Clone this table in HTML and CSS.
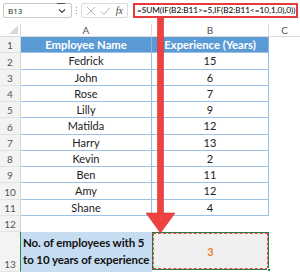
FILE: index.html
```html
<!DOCTYPE html>
<html>
<head>
<meta charset="utf-8">
<link rel="stylesheet" href="styles.css">
</head>
<body>
<div class="app">
  <div class="toolbar">
    <div class="namebox"><span class="ref">B13</span><svg class="chev" width="8" height="6" viewBox="0 0 8 6"><path d="M1 1.5 L4 4.5 L7 1.5" fill="none" stroke="#444" stroke-width="1.2"/></svg></div>
    <div class="vdots"><i></i><i></i><i></i></div>
    <div class="fxbtns">
      <svg width="10" height="10" viewBox="0 0 10 10"><path d="M1 1 L9 9 M9 1 L1 9" stroke="#b4b4b4" stroke-width="1"/></svg>
      <svg width="11" height="10" viewBox="0 0 11 10"><path d="M1 5.5 L4 8.5 L10 1.5" fill="none" stroke="#b4b4b4" stroke-width="1"/></svg>
      <span class="fx">fx</span>
    </div>
    <div class="formula">=SUM(IF(B2:B11&gt;=5,IF(B2:B11&lt;=10,1,0),0))</div>
  </div>
  <div class="sheet">
    <div class="corner"><span class="tri"></span></div>
    <div class="colh">A</div>
    <div class="colh">B</div>
    <div class="colh last">C</div>

    <div class="rowh">1</div><div class="cell head">Employee Name</div><div class="cell head">Experience (Years)</div><div class="blank"></div>
    <div class="rowh">2</div><div class="cell">Fedrick</div><div class="cell">15</div><div class="blank"></div>
    <div class="rowh">3</div><div class="cell">John</div><div class="cell">6</div><div class="blank"></div>
    <div class="rowh">4</div><div class="cell">Rose</div><div class="cell">7</div><div class="blank"></div>
    <div class="rowh">5</div><div class="cell">Lilly</div><div class="cell">9</div><div class="blank"></div>
    <div class="rowh">6</div><div class="cell">Matilda</div><div class="cell">12</div><div class="blank"></div>
    <div class="rowh">7</div><div class="cell">Harry</div><div class="cell">13</div><div class="blank"></div>
    <div class="rowh">8</div><div class="cell">Kevin</div><div class="cell">2</div><div class="blank"></div>
    <div class="rowh">9</div><div class="cell">Ben</div><div class="cell">11</div><div class="blank"></div>
    <div class="rowh">10</div><div class="cell">Amy</div><div class="cell">12</div><div class="blank"></div>
    <div class="rowh">11</div><div class="cell">Shane</div><div class="cell">4</div><div class="blank"></div>
    <div class="rowh">12</div><div class="blank"></div><div class="blank"></div><div class="blank"></div>
    <div class="rowh sel">13</div>
    <div class="label"><span>No. of employees with 5</span><span>to 10 years of experience</span></div>
    <div class="result"><span class="ants">3</span><span class="handle"></span></div>
    <div class="blank"></div>
  </div>
  <svg class="arrow" width="40" height="222" viewBox="0 0 40 222">
    <rect x="17.5" y="0" width="6" height="200" fill="#f04141" stroke="#d23434" stroke-width="0.6"/>
    <path d="M6 197 L35 197 L20.5 217 Z" fill="#f04141" stroke="#d23434" stroke-width="0.6"/>
  </svg>
</div>
</body>
</html>
```
FILE: styles.css
```css
* { box-sizing: border-box; }
html, body { margin: 0; padding: 0; background: #fff; }
body { width: 300px; height: 274px; overflow: hidden; font-family: Lato, "Liberation Sans", sans-serif; }
.app { position: relative; width: 300px; height: 274px; overflow: hidden; background: #fff; }

.toolbar { height: 24px; display: flex; align-items: flex-start; padding: 3px 0 0 3px; }
.namebox { position: relative; width: 69px; height: 15px; border: 1px solid #c9c9c9; border-radius: 2px; display: flex; align-items: center; justify-content: space-between; padding: 0 5px 0 4px; }
.namebox::after { content: ""; position: absolute; right: 6px; top: -1px; width: 8px; height: 1px; background: #555; }
.ref { font-family: "Open Sans", sans-serif; font-size: 8px; color: #222; }
.vdots { width: 9px; height: 15px; display: flex; flex-direction: column; align-items: center; justify-content: center; gap: 2px; }
.vdots i { width: 1px; height: 1px; background: #999; display: block; }
.fxbtns { width: 47px; height: 15px; border: 1px solid #dcdcdc; border-radius: 2px; display: flex; align-items: center; justify-content: space-around; padding: 0 2px; }
.fx { font-family: "Liberation Serif", serif; font-style: italic; font-size: 10px; color: #444; }
.formula { margin-left: 5px; width: 165px; height: 15px; border: 2px solid #e8393b; font-size: 8.2px; color: #000; line-height: 11px; padding-left: 2px; white-space: nowrap; overflow: hidden; }

.sheet { display: grid; grid-template-columns: 21px 131px 117px 31px; grid-template-rows: 13px repeat(12, 16.25px) 40px; }
.corner { position: relative; background: #fff; border-right: 1px solid #dadada; border-bottom: 1px solid #dadada; }
.tri { position: absolute; right: 2px; bottom: 2px; width: 0; height: 0; border-left: 9px solid transparent; border-bottom: 9px solid #d9d9d9; }
.colh { background: #fff; border-right: 1px solid #dadada; border-bottom: 1px solid #dadada; text-align: center; font-size: 10px; color: #555; line-height: 12px; }
.colh.last { border-right: 0; }
.rowh { background: #f3f3f3; border-right: 1px solid #d4d4d4; border-bottom: 1px solid #e2e2e2; font-size: 10px; color: #555; display: flex; align-items: flex-end; justify-content: center; padding-bottom: 1px; line-height: 12px; }
.rowh.sel { border-right: 1px solid #2d8a4f; }
.cell { border-bottom: 1px solid #9bc2e6; border-right: 1px solid #9bc2e6; font-size: 11px; color: #222; text-align: center; line-height: 15px; white-space: nowrap; overflow: hidden; }
.cell.head { background: #5b9bd5; color: #fff; font-weight: 700; font-size: 11.3px; border-bottom-color: #9bc2e6; border-right-color: #8db6df; }
.blank { background: #fff; }
.label { background: #c6dcf1; font-weight: 700; font-size: 11.5px; color: #111; line-height: 17px; padding: 2px 0 0 2px; display: flex; flex-direction: column; white-space: nowrap; letter-spacing: -0.1px; }
.result { position: relative; background: #f0f0f0; border: 1px solid #2a7a4a; margin-bottom: 2px; }
.ants { position: absolute; inset: 0; border: 1px dashed #e94a4a; display: flex; align-items: center; justify-content: center; color: #ed7d31; font-weight: 700; font-size: 11px; }
.handle { position: absolute; right: -3px; bottom: -3px; width: 4px; height: 4px; background: #2a7a4a; border: 1px solid #fff; }

.arrow { position: absolute; left: 140px; top: 16px; }
```
